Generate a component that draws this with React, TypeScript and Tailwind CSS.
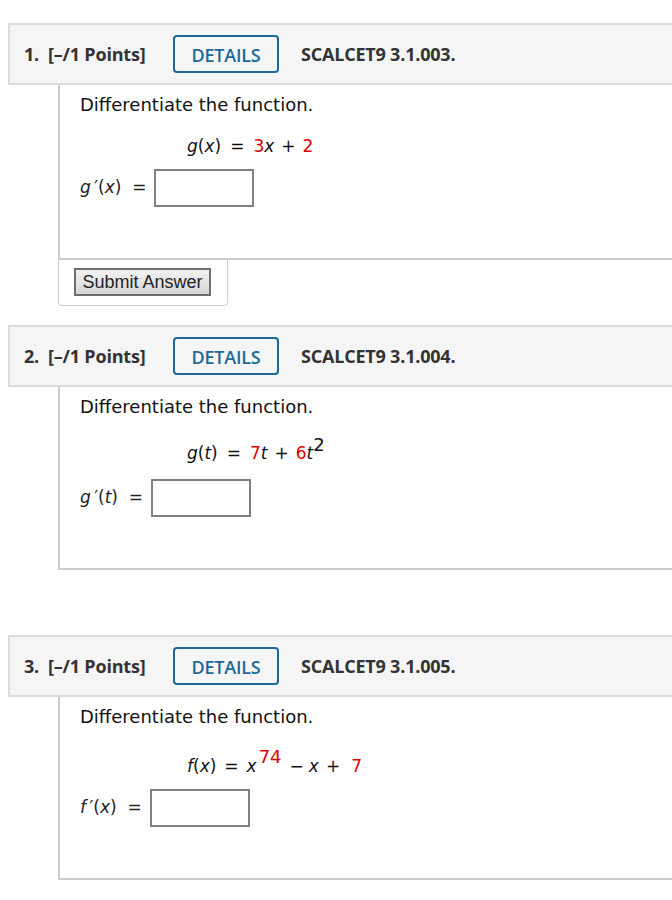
import React from 'react'

const HEAD = "font-['Open_Sans',sans-serif]"
const BODY = "font-['DejaVu_Sans',Verdana,sans-serif]"

function Header({ n, code }: { n: number; code: string }) {
  return (
    <div className={`flex h-[62px] w-[700px] items-center border-2 border-[#dcdcdc] bg-[#f5f5f5] pl-[14px] ${HEAD}`}>
      <span className="w-[149px] text-[18px] font-bold tracking-[-0.2px] text-[#333]">
        {n}.&nbsp; [–/1 Points]
      </span>
      <span className="flex h-[38px] w-[106px] items-center justify-center rounded-[4px] border-2 border-[#1d6897] pt-[3px] text-[18px] font-semibold tracking-[-0.2px] text-[#1d6897]">
        DETAILS
      </span>
      <span className="ml-[22px] text-[18px] font-bold tracking-[-0.2px] text-[#333]">{code}</span>
    </div>
  )
}

function Answer({ label, gap, top }: { label: React.ReactNode; gap: string; top: string }) {
  return (
    <div className={`${top} flex items-center`}>
      <span className={`text-[17px] text-[#222] ${gap}`}>{label}</span>
      <span className="h-[38px] w-[100px] border-2 border-[#808080] bg-white" />
    </div>
  )
}

function Body({
  children,
  math,
  mathTop,
  height,
}: {
  children: React.ReactNode
  math: React.ReactNode
  mathTop: string
  height: string
}) {
  return (
    <div className={`ml-[50px] ${height} w-[650px] border-b-2 border-l-2 border-[#cccccc] bg-white pl-[20px] pt-[8px] ${BODY}`}>
      <div className="text-[18px] leading-[23px] text-[#111]">Differentiate the function.</div>
      <div className={`${mathTop} ml-[107px] text-[17px] leading-[22px] text-[#111]`}>{math}</div>
      {children}
    </div>
  )
}

const red = 'text-[#e00000]'

export default function App() {
  return (
    <div className="h-[900px] w-[672px] overflow-hidden bg-white">
      <div className="ml-[8px] pt-[23px]">
        {/* Question 1 */}
        <Header n={1} code="SCALCET9 3.1.003." />
        <Body
          height="h-[175px]"
          mathTop="mt-[19px]"
          math={
            <>
              <i>g</i>(<i>x</i>)<span className="mx-[9px]">=</span>
              <span className={red}>3</span>
              <i>x</i>
              <span className="mx-[7px]">+</span>
              <span className={red}>2</span>
            </>
          }
        >
          <Answer
            top="mt-[12px]"
            gap="w-[74px]"
            label={
              <>
                <i>g</i>&thinsp;′(<i>x</i>) &nbsp;=
              </>
            }
          />
        </Body>
        <div className="ml-[50px] flex h-[46px] w-[170px] items-center rounded-b-[4px] border border-t-0 border-[#cccccc] pb-[2px] pl-[15px]">
          <button className="h-[28px] w-[137px] border-2 border-[#6e6e6e] bg-gradient-to-b from-[#f2f2f2] to-[#d6d6d6] font-['Liberation_Sans',Arial,sans-serif] text-[18px] leading-[20px] text-[#222]">
            Submit Answer
          </button>
        </div>

        {/* Question 2 */}
        <div className="mt-[19px]">
          <Header n={2} code="SCALCET9 3.1.004." />
        </div>
        <Body
          height="h-[183px]"
          mathTop="mt-[24px]"
          math={
            <>
              <i>g</i>(<i>t</i>)<span className="mx-[9px]">=</span>
              <span className={red}>7</span>
              <i>t</i>
              <span className="mx-[7px]">+</span>
              <span className={red}>6</span>
              <i>t</i>
              <sup className="-top-[8px] text-[18px]">2</sup>
            </>
          }
        >
          <Answer
            top="mt-[15px]"
            gap="w-[71px]"
            label={
              <>
                <i>g</i>&thinsp;′(<i>t</i>) &nbsp;=
              </>
            }
          />
        </Body>

        {/* Question 3 */}
        <div className="mt-[65px]">
          <Header n={3} code="SCALCET9 3.1.005." />
        </div>
        <Body
          height="h-[183px]"
          mathTop="mt-[27px]"
          math={
            <>
              <i>f</i>(<i>x</i>)
              <span className="mx-[8px]">=</span>
              <i>x</i>
              <sup className={`ml-[2px] -top-[9px] text-[18px] ${red}`}>74</sup>
              <span className="ml-[8px] mr-[5px]">−</span>
              <i>x</i>
              <span className="mx-[7px]">+</span>
              <span className={`ml-[4px] ${red}`}>7</span>
            </>
          }
        >
          <Answer
            top="mt-[12px]"
            gap="w-[70px]"
            label={
              <>
                <i>f</i>&thinsp;′(<i>x</i>) &nbsp;=
              </>
            }
          />
        </Body>
      </div>
    </div>
  )
}
